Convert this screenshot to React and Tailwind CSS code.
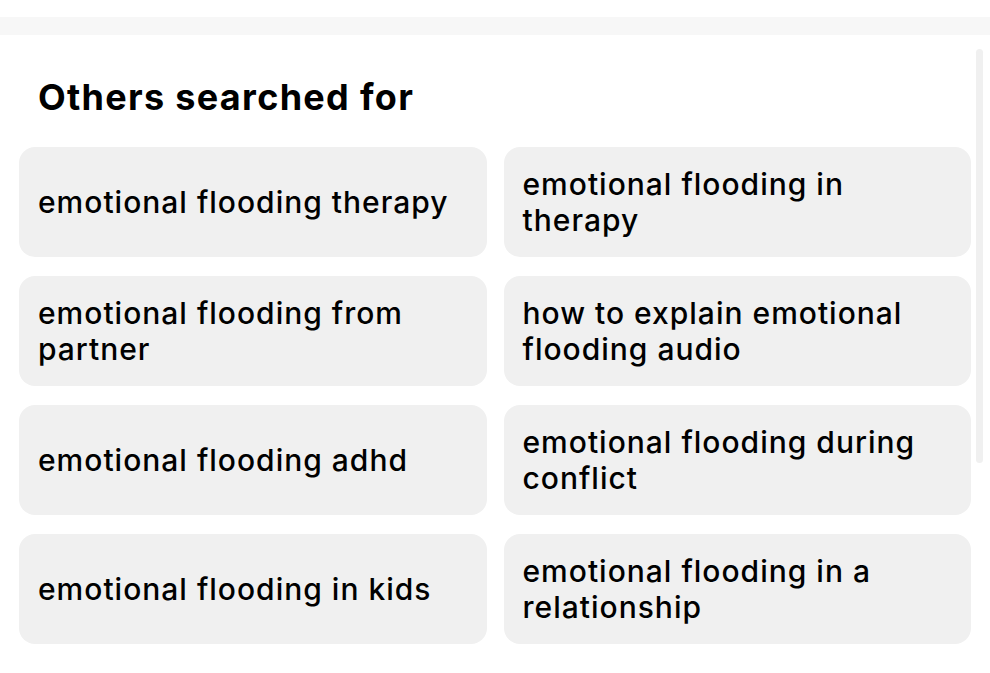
import React from "react";

const items = [
  "emotional flooding therapy",
  "emotional flooding in therapy",
  "emotional flooding from partner",
  "how to explain emotional flooding audio",
  "emotional flooding adhd",
  "emotional flooding during conflict",
  "emotional flooding in kids",
  "emotional flooding in a relationship",
];

export default function App() {
  return (
    <div
      className="relative w-[990px] h-[673px] overflow-hidden bg-white text-black"
      style={{ fontFamily: 'Inter, "Liberation Sans", Arial, sans-serif' }}
    >
      <div className="h-[17px]" />
      <div className="h-[18px] bg-[#f7f7f7]" />
      <div className="px-[19px]">
        <h2 className="pl-[19px] pt-[40px] h-[112px] text-[36px] leading-[44px] font-bold tracking-[1.3px]">
          Others searched for
        </h2>
        <div className="grid grid-cols-2 gap-x-[17px] gap-y-[19px]">
          {items.map((t) => (
            <div
              key={t}
              className="h-[110px] rounded-[16px] bg-[#f0f0f0] flex items-center pl-[19px] pr-[20px] text-[30px] leading-[36px] font-medium tracking-[1px]"
            >
              {t}
            </div>
          ))}
        </div>
      </div>
      <div className="absolute left-[976px] top-[49px] w-[7px] h-[414px] rounded-full bg-[#f0f0f0]" />
    </div>
  );
}
